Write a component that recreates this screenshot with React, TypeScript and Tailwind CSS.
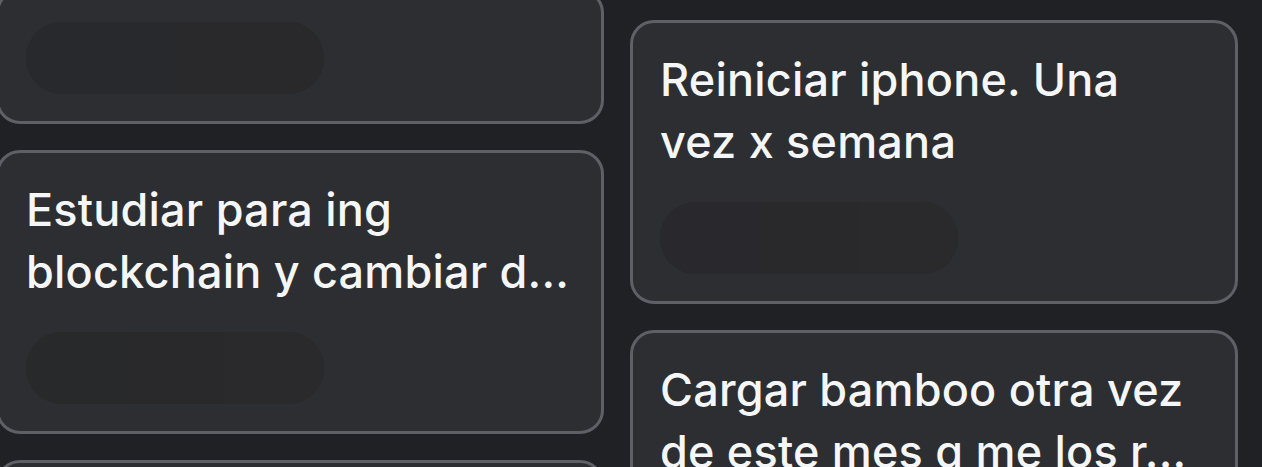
import React from 'react';

type Note = {
  lines: string[];
  chips?: string[];
};

const leftNotes: Note[] = [
  { lines: [], chips: ['#28292c', '#29292c'] },
  { lines: ['Estudiar para ing', 'blockchain y cambiar d...'], chips: ['#28292b', '#29292c', '#2a2a2d'] },
  { lines: ['', ''] },
];

const rightNotes: Note[] = [
  { lines: ['Reiniciar iphone. Una', 'vez x semana'], chips: ['#29282c', '#29292c', '#2a2a2d'] },
  { lines: ['Cargar bamboo otra vez', 'de este mes q me los r...'] },
];

function Pill({ chips, first }: { chips: string[]; first?: boolean }) {
  return (
    <div
      className={`flex h-[72px] w-[298px] overflow-hidden rounded-full bg-[#28292c] ${
        first ? '' : 'mt-[29px]'
      }`}
    >
      {chips.map((c, i) => (
        <div key={i} className="h-full flex-1" style={{ backgroundColor: c }} />
      ))}
    </div>
  );
}

function NoteCard({ note, first }: { note: Note; first?: boolean }) {
  return (
    <div
      className={`rounded-[24px] border-[3px] border-[#5f6065] bg-[#2d2e31] pl-[27px] pr-6 pb-[27px] ${
        first ? 'pt-[30px]' : 'pt-[26px]'
      }`}
    >
      {note.lines.length > 0 && (
        <div className="text-[45px] font-medium leading-[62px] tracking-[0.2px] text-[#f5f6f7] whitespace-nowrap">
          {note.lines.map((l, i) => (
            <div key={i} className="h-[62px]">
              {l}
            </div>
          ))}
        </div>
      )}
      {note.chips && <Pill chips={note.chips} first={first} />}
    </div>
  );
}

export default function App() {
  return (
    <div
      className="h-[467px] w-[1262px] overflow-hidden bg-[#202124]"
      style={{ fontFamily: 'Inter, Roboto, Arial, sans-serif' }}
    >
      <div className="ml-[-4px] mr-[24px] grid grid-cols-2 gap-x-[26px]">
        <div className="mt-[-11px] flex flex-col gap-[26px]">
          {leftNotes.map((n, i) => (
            <NoteCard key={i} note={n} first={i === 0} />
          ))}
        </div>
        <div className="mt-[20px] flex flex-col gap-[26px]">
          {rightNotes.map((n, i) => (
            <NoteCard key={i} note={n} />
          ))}
        </div>
      </div>
    </div>
  );
}
